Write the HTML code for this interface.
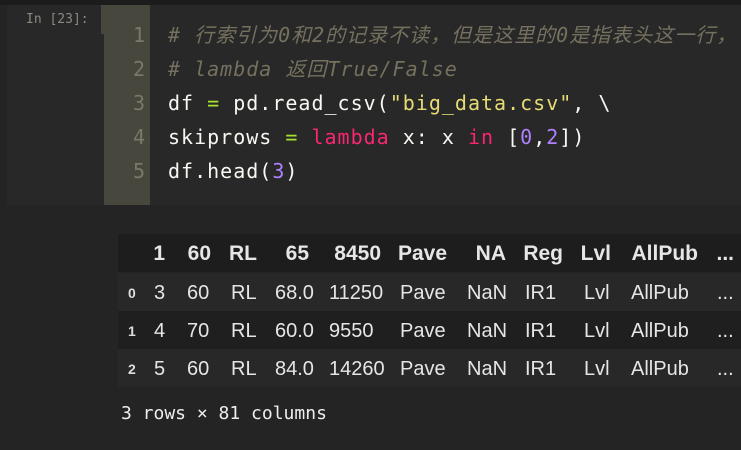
<!DOCTYPE html>
<html><head><meta charset="utf-8"><style>
body{margin:0;width:741px;height:450px;background:#242424;position:relative;overflow:hidden;font-family:"Liberation Sans",sans-serif}
.top{position:absolute;left:0;top:0;width:741px;height:5px;background:#1c1c1c}
.cell{position:absolute;left:7px;top:5px;width:734px;height:200px;background:#282828}
.gut{position:absolute;left:104px;top:5px;width:46px;height:200px;background:#48473e}
.tab{position:absolute;left:101px;top:5px;width:4px;height:29px;background:#48473e}
.prompt{position:absolute;left:26px;top:12px;font:13px "DejaVu Sans Mono",monospace;color:#8a8a80}
.ln{position:absolute;right:596px;font:20px "DejaVu Sans Mono",monospace;color:#7a7968;line-height:34px}
.code{position:absolute;left:168px;font:20px "DejaVu Sans Mono","Noto Sans CJK SC",monospace;color:#f8f8f2;line-height:34px;white-space:pre;letter-spacing:1px}
.c{color:#75715e;font-style:italic}.g{color:#a6e22e}.p{color:#f92672}.s{color:#e6db74}.n{color:#ae81ff}
.row{position:absolute;left:118px;width:623px;height:38px}
.t{position:absolute;font:20px "Liberation Sans Narrow","Liberation Sans",sans-serif;color:#e6e6e6;line-height:40px;white-space:nowrap}
.h{font-weight:bold;transform:translateX(-100%);font-size:21px}
.i{font-weight:bold;font-size:14px;color:#ddd}
.foot{position:absolute;left:121px;top:403px;font:18px "DejaVu Sans Mono",monospace;color:#eee}
</style></head><body>
<div class="top"></div><div class="cell"></div><div class="gut"></div><div class="tab"></div>
<div class="prompt">In [23]:</div>
<div class="ln" style="top:18px">1</div><div class="ln" style="top:52px">2</div><div class="ln" style="top:86px">3</div><div class="ln" style="top:120px">4</div><div class="ln" style="top:154px">5</div>
<div class="code" style="top:18px"><span class="c"># 行索引为0和2的记录不读，但是这里的0是指表头这一行，</span></div>
<div class="code" style="top:52px"><span class="c"># lambda 返回True/False</span></div>
<div class="code" style="top:86px">df <span class="g">=</span> pd.read_csv(<span class="s">"big_data.csv"</span>, \</div>
<div class="code" style="top:120px">skiprows <span class="g">=</span> <span class="p">lambda</span> x: x <span class="p">in</span> [<span class="n">0</span>,<span class="n">2</span>])</div>
<div class="code" style="top:154px">df.head(<span class="n">3</span>)</div>

<div class="row" style="top:234px;background:#1d1d1d">
<span class="t h" style="left:47px">1</span><span class="t h" style="left:93px">60</span><span class="t h" style="left:139px">RL</span><span class="t h" style="left:191px">65</span><span class="t h" style="left:263px">8450</span><span class="t h" style="left:329px">Pave</span><span class="t h" style="left:388px">NA</span><span class="t h" style="left:445px">Reg</span><span class="t h" style="left:493px">Lvl</span><span class="t h" style="left:580px">AllPub</span><span class="t h" style="left:616px">...</span>
</div>
<script>
const rows=[["0","3","60","RL","68.0","11250"],["1","4","70","RL","60.0","9550"],["2","5","60","RL","84.0","14260"]];
const xs=[10,36,69,113,157,211,282,349,407,466,513,599];
rows.forEach((r,k)=>{const d=document.createElement('div');d.className='row';d.style.top=(273+38*k)+'px';d.style.background=k%2?'#1f1f1f':'#282828';
const v=r.concat(["Pave","NaN","IR1","Lvl","AllPub","..."]);
v.forEach((t,j)=>{const s=document.createElement('span');s.className='t'+(j==0?' i':'');s.style.left=xs[j]+'px';s.textContent=t;d.appendChild(s)});document.body.appendChild(d)});
</script>
<div class="foot">3 rows × 81 columns</div>
</body></html>
